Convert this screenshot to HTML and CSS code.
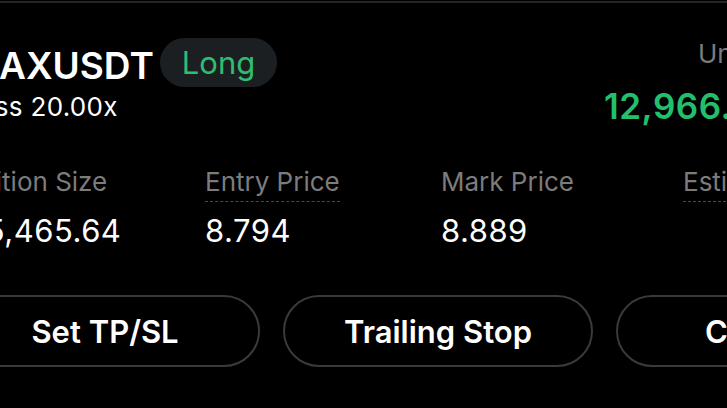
FILE: index.html
```html
<!DOCTYPE html>
<html lang="en">
<head>
    <meta charset="UTF-8">
    <meta name="viewport" content="width=device-width, initial-scale=1.0">
    <title>Position</title>
    <link rel="stylesheet" href="styles.css">
</head>
<body>
    <div class="rule"></div>

    <div class="card">
        <!-- Intestazione posizione -->
        <div class="head">
            <div class="head-left">
                <div class="title-row">
                    <span class="symbol">AXUSDT</span>
                    <span class="badge">Long</span>
                </div>
                <div class="sub">Cross 20.00x</div>
            </div>
            <div class="pnl">
                <div class="pnl-label">Unrealized PNL (USDT)</div>
                <div class="pnl-value">12,966.43 (+4.21%)</div>
            </div>
        </div>

        <!-- Dati posizione -->
        <div class="stats">
            <div class="stat">
                <span class="label">Position Size</span>
                <div class="value first">185,465.64</div>
            </div>
            <div class="stat">
                <span class="label dotted">Entry Price</span>
                <div class="value">8.794</div>
            </div>
            <div class="stat">
                <span class="label">Mark Price</span>
                <div class="value">8.889</div>
            </div>
            <div class="stat">
                <span class="label dotted">Estimated Liq. Price</span>
                <div class="value"></div>
            </div>
        </div>

        <!-- Azioni -->
        <div class="actions">
            <button class="btn">Set TP/SL</button>
            <button class="btn">Trailing Stop</button>
            <button class="btn">Close All</button>
        </div>
    </div>
</body>
</html>
```

FILE: styles.css
```css
body {
    margin: 0;
    background: #000;
    color: #f2f2f2;
    font-family: Inter, "Noto Sans", sans-serif;
    overflow: hidden;
}
.rule {
    height: 2px;
    margin-top: 1px;
    background: #262626;
}
.card {
    margin-left: -50px;
    width: 976px;
    padding-top: 33px;
}
.head {
    display: flex;
}
.head-left {
    flex: 1;
}
.title-row {
    display: flex;
    align-items: center;
    gap: 6px;
}
.symbol {
    margin-left: 49px;
    margin-top: 7px;
    font-size: 37px;
    font-weight: 600;
    line-height: 46px;
    color: #fff;
}
.badge {
    padding: 6px 22px;
    border-radius: 25px;
    background: #1c1f22;
    color: #2fbd70;
    font-size: 31px;
    line-height: 37px;
}
.sub {
    margin-top: 3px;
    font-size: 26px;
    line-height: 30px;
    letter-spacing: 0.3px;
    color: #fff;
}
.pnl {
    width: 322px;
    padding-top: 2px;
}
.pnl-label {
    margin-left: 94px;
    font-size: 26px;
    line-height: 32px;
    color: #7c7c7c;
    white-space: nowrap;
}
.pnl-value {
    margin-top: 16px;
    font-size: 35px;
    font-weight: 600;
    line-height: 40px;
    letter-spacing: 0.5px;
    color: #22c06c;
    white-space: nowrap;
}
.stats {
    display: grid;
    grid-template-columns: 255px 236px 242px 1fr;
    margin-top: 40px;
}
.label {
    display: inline-block;
    padding-bottom: 3px;
    border-bottom: 1px solid transparent;
    font-size: 26px;
    line-height: 32px;
    color: #7c7c7c;
    white-space: nowrap;
}
.label.dotted {
    border-bottom: 1px dashed #4a4a4a;
}
.value {
    margin-top: 11px;
    min-height: 36px;
    font-size: 31px;
    line-height: 36px;
    letter-spacing: 0.5px;
    color: #fff;
}
.value.first {
    margin-left: 3px;
}
.actions {
    display: flex;
    gap: 23px;
    margin-top: 46px;
}
.btn {
    width: 310px;
    height: 72px;
    border: 2px solid #3a3a3a;
    border-radius: 36px;
    background: #000;
    color: #fff;
    font-family: Inter, "Noto Sans", sans-serif;
    font-size: 31px;
    font-weight: 600;
}
```
